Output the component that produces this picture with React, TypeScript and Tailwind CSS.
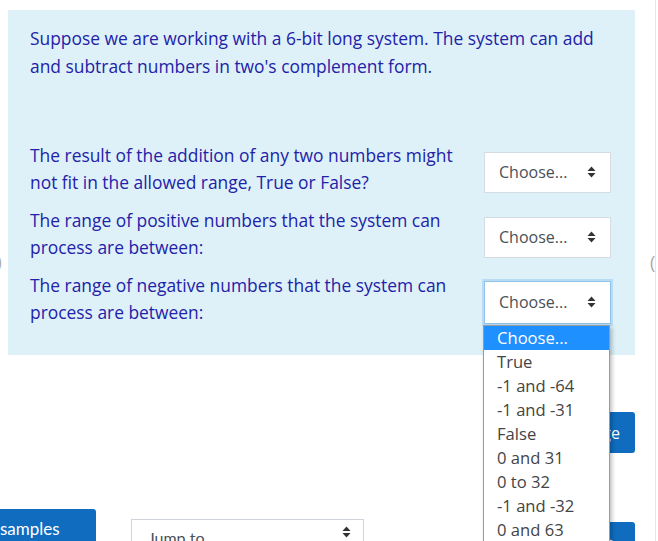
import React from 'react';

const questions = [
  ['The result of the addition of any two numbers might', 'not fit in the allowed range, True or False?'],
  ['The range of positive numbers that the system can', 'process are between:'],
  ['The range of negative numbers that the system can', 'process are between:'],
];

const options = ['Choose...', 'True', '-1 and -64', '-1 and -31', 'False', '0 and 31', '0 to 32', '-1 and -32', '0 and 63'];

const Arrows: React.FC = () => (
  <svg width="9" height="12" viewBox="0 0 9 12" className="shrink-0">
    <path d="M4.5 0.5 L8.5 5 H0.5 Z" fill="#333" />
    <path d="M4.5 11.5 L8.5 7 H0.5 Z" fill="#333" />
  </svg>
);

const FakeSelect: React.FC<{ focused?: boolean }> = ({ focused }) => (
  <div
    className={
      focused
        ? 'flex h-[43px] w-[127px] items-center justify-between border border-[#8fc3ec] bg-white pl-[14px] pr-[14px] text-[16px] text-[#495057] shadow-[0_0_0_2px_rgba(120,180,235,0.35)]'
        : 'flex h-[41px] w-[127px] items-center justify-between border border-[#d6dde2] bg-white pl-[14px] pr-[14px] text-[16px] text-[#495057]'
    }
  >
    <span>Choose...</span>
    <Arrows />
  </div>
);

const App: React.FC = () => {
  return (
    <div className="relative flex h-[541px] overflow-hidden bg-white font-['Open_Sans',sans-serif] text-[16px]">
      <div className="relative flex-1">
        <div className="ml-2 mr-[20px] mt-[10px] bg-[#def1f8] pl-[22px] pr-[24px] pt-[14px] pb-[29px] text-[17.4px] text-[#2222a8]">
          <p className="whitespace-nowrap leading-[28px]">
            Suppose we are working with a 6-bit long system. The system can add
            <br />
            and subtract numbers in two's complement form.
          </p>
          <div className="mt-[62px] flex flex-col gap-[11px]">
            {questions.map((q, i) => (
              <div key={i} className="flex items-center justify-between">
                <p className="whitespace-nowrap leading-[27px]">
                  {q[0]}
                  <br />
                  {q[1]}
                </p>
                <div className="pt-[6px]">
                  <FakeSelect focused={i === 2} />
                </div>
              </div>
            ))}
          </div>
        </div>

        <div className="mr-[20px] mt-[57px] flex justify-end">
          <button className="h-[41px] rounded-[3px] bg-[#0f6cbf] pl-[14px] pr-[15px] text-[16px] text-white">Next page</button>
        </div>

        <div className="mt-[56px] flex items-start">
          <button className="h-[40px] w-[96px] whitespace-nowrap rounded-r-[3px] bg-[#0f6cbf] pr-[34px] text-left font-['Lato',sans-serif] text-[17px] text-white">
            samples
          </button>
          <div className="ml-[35px] mt-[10px] flex h-[40px] w-[233px] shrink-0 items-start justify-between border border-[#ced4da] pl-[16px] pr-[12px] pt-[6px] font-['Lato',sans-serif] text-[#495057]">
            <span>Jump to...</span>
            <Arrows />
          </div>
          <div className="flex-1" />
          <button className="mr-[20px] mt-[13px] h-[40px] rounded-[3px] bg-[#0f6cbf] pl-[16px] pr-[14px] text-white">Next ►</button>
        </div>

        <span className="absolute left-[-3px] top-[250px] text-[16px] text-[#aaa]">)</span>

        <div className="absolute left-[483px] top-[325px] w-[127px] border border-[#9a9a9a] bg-white text-[16.6px] text-[#444] shadow-[2px_2px_4px_rgba(0,0,0,0.25)]">
          {options.map((o, i) => (
            <div
              key={o}
              className={i === 0 ? 'h-[24px] bg-[#1e90ff] pl-[13px] leading-[24px] text-white' : 'h-[24px] pl-[13px] leading-[24px]'}
            >
              {o}
            </div>
          ))}
        </div>
      </div>
      <div className="relative w-[3px] border-l border-[#e6e6e6]">
        <span className="absolute left-[-6px] top-[249px] text-[18px] text-[#aaa]">(</span>
      </div>
    </div>
  );
};

export default App;
